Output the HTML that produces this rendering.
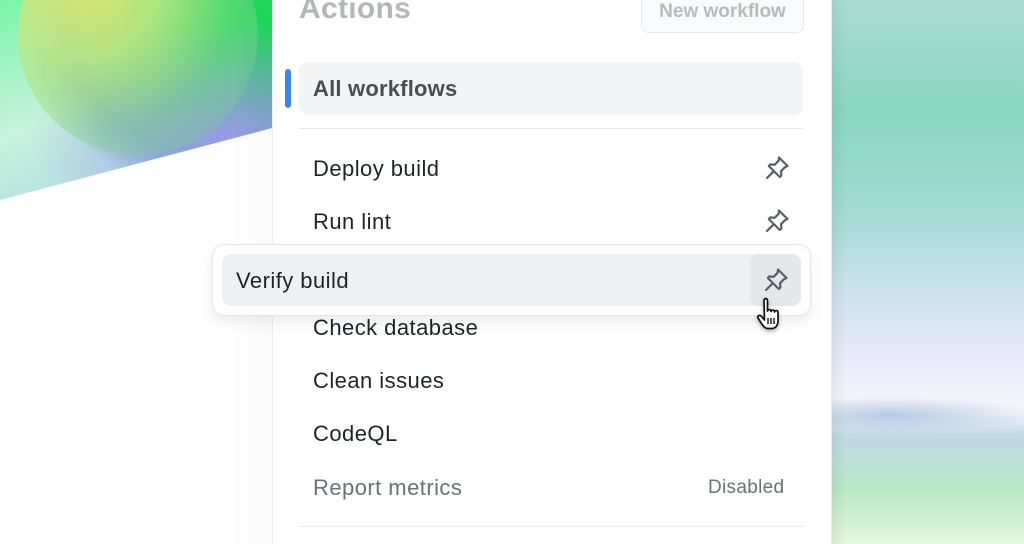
<!DOCTYPE html>
<html><head><meta charset="utf-8"><style>
*{margin:0;padding:0;box-sizing:border-box}
body{width:1024px;height:544px;overflow:hidden;background:#fff;position:relative;font-family:"Liberation Sans",sans-serif}
.grad{position:absolute;left:0;top:0;width:272px;height:210px;clip-path:polygon(0 0,272px 0,272px 128px,0 200px);overflow:hidden;
background:
radial-gradient(ellipse 200px 120px at 230px 140px,rgba(160,150,240,.9),rgba(0,0,0,0)),
radial-gradient(ellipse 220px 180px at 240px 20px,#14e050 0,#3cc878 50%,rgba(90,170,170,.8) 80%,rgba(0,0,0,0) 100%),
linear-gradient(160deg,#7af4a8 0,#c8f2dc 45%,#b0dce4 80%,#d8f0ee 100%);}
.circ{position:absolute;left:18px;top:-85px;width:240px;height:240px;border-radius:50%;
background:radial-gradient(circle at 30% 30%,rgba(225,230,110,.95) 0,rgba(200,235,130,.8) 30%,rgba(140,215,140,.45) 60%,rgba(110,170,200,.35) 100%);}
.shadowL{position:absolute;left:230px;top:0;width:42px;height:544px;background:linear-gradient(90deg,rgba(0,0,0,0),rgba(0,0,0,.025))}
.right{position:absolute;left:832px;top:0;width:192px;height:544px;background:
radial-gradient(ellipse 150px 18px at 60px 415px,rgba(140,175,210,.6),rgba(0,0,0,0)),
linear-gradient(180deg,#a9dcd2 0,#8ad6c0 20%,#a0dad2 38%,#d0e2ee 55%,#ecedfa 68%,#f6f6fc 76%,#c0d8e6 80%,#b8e8c4 90%,#e6f6e0 100%);}
.right::after{content:"";position:absolute;inset:0;background:linear-gradient(90deg,rgba(0,0,0,.05),rgba(0,0,0,0) 15px)}
.panel{position:absolute;left:272px;top:0;width:560px;height:544px;background:#fff;border-left:1px solid #eceef0;border-right:1px solid #e6e8eb}
.t{position:absolute;font-size:22px;letter-spacing:.45px;color:#1f2328}
.pin{position:absolute;width:26px;height:26px}
.div{position:absolute;left:299px;width:504px;height:1px;background:#e6e8eb}
</style></head><body>
<div class="grad"><div class="circ"></div></div>
<div class="shadowL"></div>
<div class="right"></div>
<div class="panel"></div>
<div class="t" style="left:299px;top:-8px;font-size:30px;font-weight:bold;color:#b4b6b9;letter-spacing:.3px">Actions</div>
<div style="position:absolute;left:641px;top:-10px;width:163px;height:43px;border:1px solid #e6e8eb;border-radius:8px;background:#f9fafb;color:#b8babd;font-size:19px;font-weight:bold;text-align:center;line-height:42px">New workflow</div>
<div style="position:absolute;left:285px;top:69px;width:6px;height:39px;border-radius:3px;background:#3a85ea"></div>
<div style="position:absolute;left:299px;top:62px;width:504px;height:53px;border-radius:9px;background:#f3f4f6"></div>
<div class="t" style="left:313px;top:76px;font-weight:bold;color:#4a4d52;letter-spacing:.2px">All workflows</div>
<div class="div" style="top:128px"></div>
<div class="t" style="left:313px;top:156px">Deploy build</div>
<div class="t" style="left:313px;top:209px">Run lint</div>
<div class="t" style="left:313px;top:315px">Check database</div>
<div class="t" style="left:313px;top:368px">Clean issues</div>
<div class="t" style="left:313px;top:421px">CodeQL</div>
<div class="t" style="left:313px;top:475px;color:#6c7077">Report metrics</div>
<div class="t" style="left:708px;top:477px;font-size:19px;color:#6c7077;letter-spacing:.3px">Disabled</div>
<div class="div" style="top:526px"></div>
<svg width="0" height="0" style="position:absolute"><defs><g id="p" fill="none" stroke="#5a5f66" stroke-width="2.2" stroke-linejoin="round" stroke-linecap="round"><path d="M15 2.5l8.5 8.5-2.5 1.2-4 4 .4 4.3-1.6 1.5-5.5-5.5-5.5-5.5L6.3 9.4l4.3.4 4-4z"/><path d="M9.3 16.7L3 23"/></g></defs></svg>
<svg class="pin" style="left:764px;top:155px" viewBox="0 0 26 26"><use href="#p"/></svg>
<svg class="pin" style="left:764px;top:208px" viewBox="0 0 26 26"><use href="#p"/></svg>
<div style="position:absolute;left:212px;top:244px;width:599px;height:72px;border-radius:12px;background:#fff;border:1px solid #e3e5e8;box-shadow:0 6px 14px rgba(0,0,0,.08)"></div>
<div style="position:absolute;left:222px;top:254px;width:579px;height:52px;border-radius:9px;background:#eff0f2"></div>
<div style="position:absolute;left:750px;top:254px;width:51px;height:52px;border-radius:9px;background:#e5e7ea"></div>
<div class="t" style="left:236px;top:268px">Verify build</div>
<svg class="pin" style="left:763px;top:267px" viewBox="0 0 26 26"><use href="#p"/></svg>
<svg style="position:absolute;left:756px;top:297px;filter:drop-shadow(0 2px 2px rgba(0,0,0,.3))" width="32" height="36" viewBox="0 0 32 36"><path d="M8 3.5c0-2.5 3.5-2.5 3.5 0v10.5c.5-2 3.5-2 3.5 0.5c.5-2 3.5-2 3.5 .5c.5-2 3.5-2 3.5 .5v8c0 5-2.5 8-6.5 8h-3.5c-3 0-4.5-2-6.5-5l-3.5-5.5c-1-2 1.5-3.5 3-2l3.5 4z" fill="#fff" stroke="#111" stroke-width="1.7" stroke-linejoin="round"/><path d="M12 21v6M15 21v6M18 21v6" stroke="#111" stroke-width="1.4"/></svg>
</body></html>
